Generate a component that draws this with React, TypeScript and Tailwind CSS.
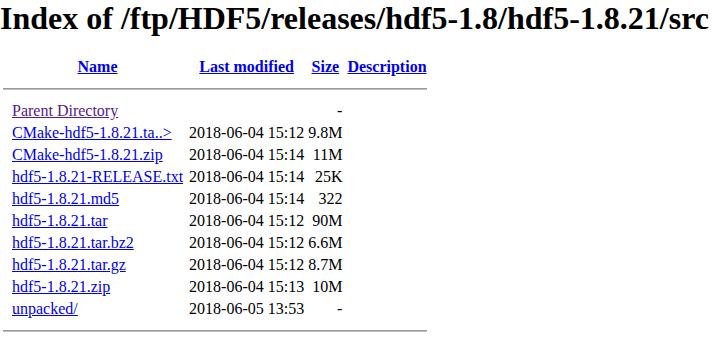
const rows = [
  { name: "CMake-hdf5-1.8.21.ta..>", date: "2018-06-04 15:12", size: "9.8M" },
  { name: "CMake-hdf5-1.8.21.zip", date: "2018-06-04 15:14", size: "11M" },
  { name: "hdf5-1.8.21-RELEASE.txt", date: "2018-06-04 15:14", size: "25K" },
  { name: "hdf5-1.8.21.md5", date: "2018-06-04 15:14", size: "322" },
  { name: "hdf5-1.8.21.tar", date: "2018-06-04 15:12", size: "90M" },
  { name: "hdf5-1.8.21.tar.bz2", date: "2018-06-04 15:12", size: "6.6M" },
  { name: "hdf5-1.8.21.tar.gz", date: "2018-06-04 15:12", size: "8.7M" },
  { name: "hdf5-1.8.21.zip", date: "2018-06-04 15:13", size: "10M" },
  { name: "unpacked/", date: "2018-06-05 13:53", size: "-" },
];

export default function App() {
  return (
    <div className="min-h-screen bg-white text-black text-base leading-[normal] font-['Liberation_Serif',serif]">
      <h1 className="text-[32px] font-bold leading-[normal] mb-[18px] whitespace-nowrap">
        Index of /ftp/HDF5/releases/hdf5-1.8/hdf5-1.8.21/src
      </h1>
      <table className="border-separate border-spacing-[2px]">
        <tbody>
          <tr>
            <th className="p-[1px] w-[7px]"></th>
            <th className="p-[1px]">
              <a href="#" className="text-[#0000ee] underline">Name</a>
            </th>
            <th className="p-[1px] pl-[3px]">
              <a href="#" className="text-[#0000ee] underline">Last modified</a>
            </th>
            <th className="p-[1px] pr-[2px]">
              <a href="#" className="text-[#0000ee] underline">Size</a>
            </th>
            <th className="p-[1px]">
              <a href="#" className="text-[#0000ee] underline">Description</a>
            </th>
          </tr>
          <tr>
            <th colSpan={5} className="p-[1px]">
              <hr className="my-2 border-t border-b border-t-[#9a9a9a] border-b-[#c0c0c0]" />
            </th>
          </tr>
          <tr>
            <td className="p-[1px]"></td>
            <td className="p-[1px]">
              <a href="#" className="text-[#551a8b] underline">Parent Directory</a>
            </td>
            <td className="p-[1px] pl-[3px]">&nbsp;</td>
            <td className="p-[1px] pr-[2px] text-right">-</td>
            <td className="p-[1px]">&nbsp;</td>
          </tr>
          {rows.map((r) => (
            <tr key={r.name}>
              <td className="p-[1px]"></td>
              <td className="p-[1px]">
                <a href="#" className="text-[#0000ee] underline">{r.name}</a>
              </td>
              <td className="p-[1px] pl-[3px] text-right">{r.date}</td>
              <td className="p-[1px] pr-[2px] text-right">{r.size}</td>
              <td className="p-[1px]">&nbsp;</td>
            </tr>
          ))}
          <tr>
            <th colSpan={5} className="p-[1px]">
              <hr className="my-2 border-t border-b border-t-[#9a9a9a] border-b-[#c0c0c0]" />
            </th>
          </tr>
        </tbody>
      </table>
    </div>
  );
}
